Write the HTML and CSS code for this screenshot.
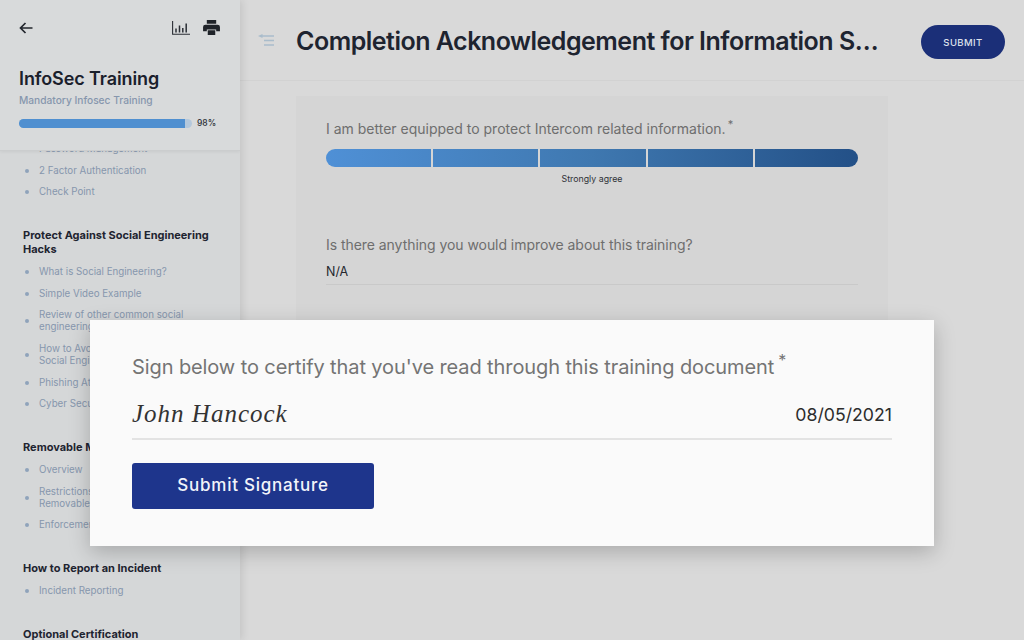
FILE: index.html
```html
<!DOCTYPE html>
<html lang="en">
<head>
<meta charset="utf-8">
<title>InfoSec Training</title>
<link rel="stylesheet" href="styles.css">
</head>
<body>
<div class="app">
  <aside class="sidebar">
    <header class="side-head">
      <div class="side-tools">
        <svg class="icon-back" viewBox="0 0 14 12" width="14" height="12"><path d="M13.5 6H2M6.5 1 1.5 6l5 5" fill="none" stroke="#23272e" stroke-width="1.7"/></svg>
        <div class="side-tools-right">
          <svg viewBox="0 0 18 14" width="18" height="14"><path d="M.6 0v13.2H18" fill="none" stroke="#2b2f36" stroke-width="1.1"/><path d="M4 7.5v4M7.5 4.5v7M10.8 7v4.500M14.200 2.500v9" fill="none" stroke="#2b2f36" stroke-width="1.500"/></svg>
          <svg viewBox="0 0 18 16" width="17" height="15"><path d="M4 0h10v4H4zM2.500 5h13A2.500 2.500 0 0 1 18 7.500V12h-4v-2H4v2H0V7.500A2.500 2.500 0 0 1 2.500 5zM5 11h8v5H5z" fill="#1f2329"/></svg>
        </div>
      </div>
      <h1 class="course-title">InfoSec Training</h1>
      <p class="course-sub">Mandatory Infosec Training</p>
      <div class="progress">
        <div class="progress-track"><div class="progress-fill"></div></div>
        <span class="progress-num">98%</span>
      </div>
    </header>
    <nav class="toc">
      <ul class="toc-list">
        <li>Password Management</li>
        <li>2 Factor Authentication</li>
        <li>Check Point</li>
      </ul>
      <h2 class="toc-head">Protect Against Social Engineering Hacks</h2>
      <ul class="toc-list">
        <li>What is Social Engineering?</li>
        <li>Simple Video Example</li>
        <li>Review of other common social engineering attacks</li>
        <li>How to Avoid Common Attacks<br>Social Engineering</li>
        <li>Phishing Attacks</li>
        <li>Cyber Security</li>
      </ul>
      <h2 class="toc-head">Removable Media</h2>
      <ul class="toc-list">
        <li>Overview</li>
        <li>Restrictions on Using<br>Removable Media</li>
        <li>Enforcement</li>
      </ul>
      <h2 class="toc-head">How to Report an Incident</h2>
      <ul class="toc-list">
        <li>Incident Reporting</li>
      </ul>
      <h2 class="toc-head">Optional Certification</h2>
    </nav>
  </aside>
  <main class="main">
    <header class="topbar">
      <svg class="icon-outdent" viewBox="0 0 16 12" width="16" height="12"><path d="M3 2h13M6 6.500h10M6 11h10" stroke="#a9bccb" stroke-width="1.700" fill="none"/><path d="M0 2 4.500 0v4z" fill="#a9bccb"/></svg>
      <h1 class="page-title">Completion Acknowledgement for Information Security</h1>
      <button class="pill-btn">SUBMIT</button>
    </header>
    <section class="content">
      <div class="form-card">
        <p class="q-label">I am better equipped to protect Intercom related information.<sup class="req">*</sup></p>
        <div class="scale">
          <span></span><span></span><span></span><span></span><span></span>
        </div>
        <p class="scale-caption">Strongly agree</p>
        <p class="q-label q-second">Is there anything you would improve about this training?</p>
        <p class="answer">N/A</p>
      </div>
    </section>
  </main>
  <section class="sign-card">
    <p class="sign-label">Sign below to certify that you've read through this training document<sup class="sign-req">*</sup></p>
    <div class="sign-row">
      <span class="signature">John Hancock</span>
      <span class="sign-date">08/05/2021</span>
    </div>
    <button class="sign-btn">Submit Signature</button>
  </section>
</div>
</body>
</html>
```
FILE: styles.css
```css
* { box-sizing: border-box; }
html, body { margin: 0; height: 100%; overflow: hidden; }
body { font-family: Inter, "Liberation Sans", sans-serif; background: #d9d9d9; color: #1e2430; }
h1, h2, p, ul { margin: 0; padding: 0; }

.app { position: relative; display: flex; width: 1024px; height: 640px; overflow: hidden; }

.sidebar { width: 240px; flex: none; height: 640px; overflow: hidden; background: #d5d7d8; box-shadow: 2px 0 8px rgba(0,0,0,.1); display: flex; flex-direction: column; position: relative; z-index: 1; }
.side-head { height: 151px; flex: none; padding: 20px 19px 0; background: #d8dadb; border-bottom: 1px solid #cbcdce; box-shadow: 0 1px 3px rgba(0,0,0,.06); position: relative; z-index: 1; }
.side-tools { display: flex; justify-content: space-between; align-items: center; height: 15px; margin-bottom: 31px; }
.side-tools-right { display: flex; align-items: center; gap: 13px; margin-right: 1px; }
.course-title { font-size: 18px; line-height: 26px; font-weight: 600; letter-spacing: -.1px; color: #1a202c; }
.course-sub { font-size: 10.200px; line-height: 16px; font-weight: 500; color: #8696ad; }
.progress { display: flex; align-items: center; gap: 5px; margin-top: 10px; }
.progress-track { width: 173px; height: 9px; border-radius: 5px; background: #b4c8dc; overflow: hidden; }
.progress-fill { width: 96%; height: 100%; background: #4f8fd0; }
.progress-num { font-size: 8.500px; font-weight: 500; color: #2b2f36; }

.toc { padding: 0 23px; margin-top: -8px; }
.toc-list { list-style: none; display: flex; flex-direction: column; gap: 9.600px; }
.toc-list li { position: relative; padding-left: 16px; font-size: 9.750px; line-height: 12px; color: #8696ad; }
.toc-list li::before { content: ""; position: absolute; left: 2px; top: 50%; width: 4px; height: 4px; margin-top: -2px; border-radius: 50%; background: #8fa3bb; }
.toc-head { font-size: 11px; line-height: 14px; font-weight: 700; color: #1e2430; margin: 30px 0 10px; }

.main { flex: 1; min-width: 0; display: flex; flex-direction: column; }
.topbar { height: 81px; flex: none; display: flex; align-items: center; padding: 2px 19px 0 18px; border-bottom: 1px solid #d2d2d2; }
.icon-outdent { flex: none; margin: -3px 22px 0 0; }
.page-title { width: 590px; flex: none; font-size: 25px; line-height: 32px; font-weight: 600; letter-spacing: -.5px; color: #1e2430; white-space: nowrap; overflow: hidden; text-overflow: ellipsis; }
.pill-btn { margin: 2px 0 0 auto; width: 84px; height: 34px; border: 0; border-radius: 17px; background: #1b2f78; color: #dde1ec; font: 500 9.500px Inter, "Liberation Sans", sans-serif; letter-spacing: .4px; }

.content { padding: 15px 0 0 56px; }
.form-card { width: 592px; height: 360px; background: #d5d5d5; padding: 24px 30px 0; }
.q-label { font-size: 14px; line-height: 18px; color: #6e6e6e; }
.req { font-size: 11px; line-height: 0; margin-left: 2px; }
.scale { display: flex; gap: 2px; height: 18px; margin-top: 11px; border-radius: 9px; overflow: hidden; background: linear-gradient(90deg, #4f90d6, #3f78b0 50%, #235087); }
.scale span { flex: 1; border-right: 2px solid #d5d5d5; margin-right: -2px; }
.scale span:last-child { border-right: 0; }
.scale-caption { font-size: 8.800px; line-height: 12px; text-align: center; color: #2f3237; margin-top: 6px; }
.q-second { margin-top: 51px; letter-spacing: -.05px; }
.answer { font-size: 12.500px; line-height: 16px; color: #26282d; margin-top: 10px; padding-bottom: 4px; border-bottom: 1px solid #c9c9c9; }

.sign-card { position: absolute; left: 90px; top: 320px; width: 844px; height: 226px; background: #fafafa; box-shadow: 0 6px 20px rgba(0,0,0,.22); padding: 33px 42px 0; z-index: 2; }
.sign-label { font-size: 20px; line-height: 28px; letter-spacing: -.1px; color: #747474; white-space: nowrap; }
.sign-req { font-size: 16px; line-height: 0; margin-left: 4px; }
.sign-row { display: flex; justify-content: space-between; align-items: center; height: 58px; margin-top: 1px; padding: 8px 0 0; border-bottom: 2px solid #e3e3e3; }
.signature { font-family: "Liberation Serif", cursive; font-style: italic; font-size: 25px; letter-spacing: 1px; color: #333; }
.sign-date { font-size: 17.700px; color: #2c2c2c; }
.sign-btn { display: block; margin-top: 23px; width: 242px; height: 46px; border: 0; border-radius: 3px; background: #1e358c; color: #f2f4fa; font: 500 17px Inter, "Liberation Sans", sans-serif; letter-spacing: .75px; padding-bottom: 3px; }
```
